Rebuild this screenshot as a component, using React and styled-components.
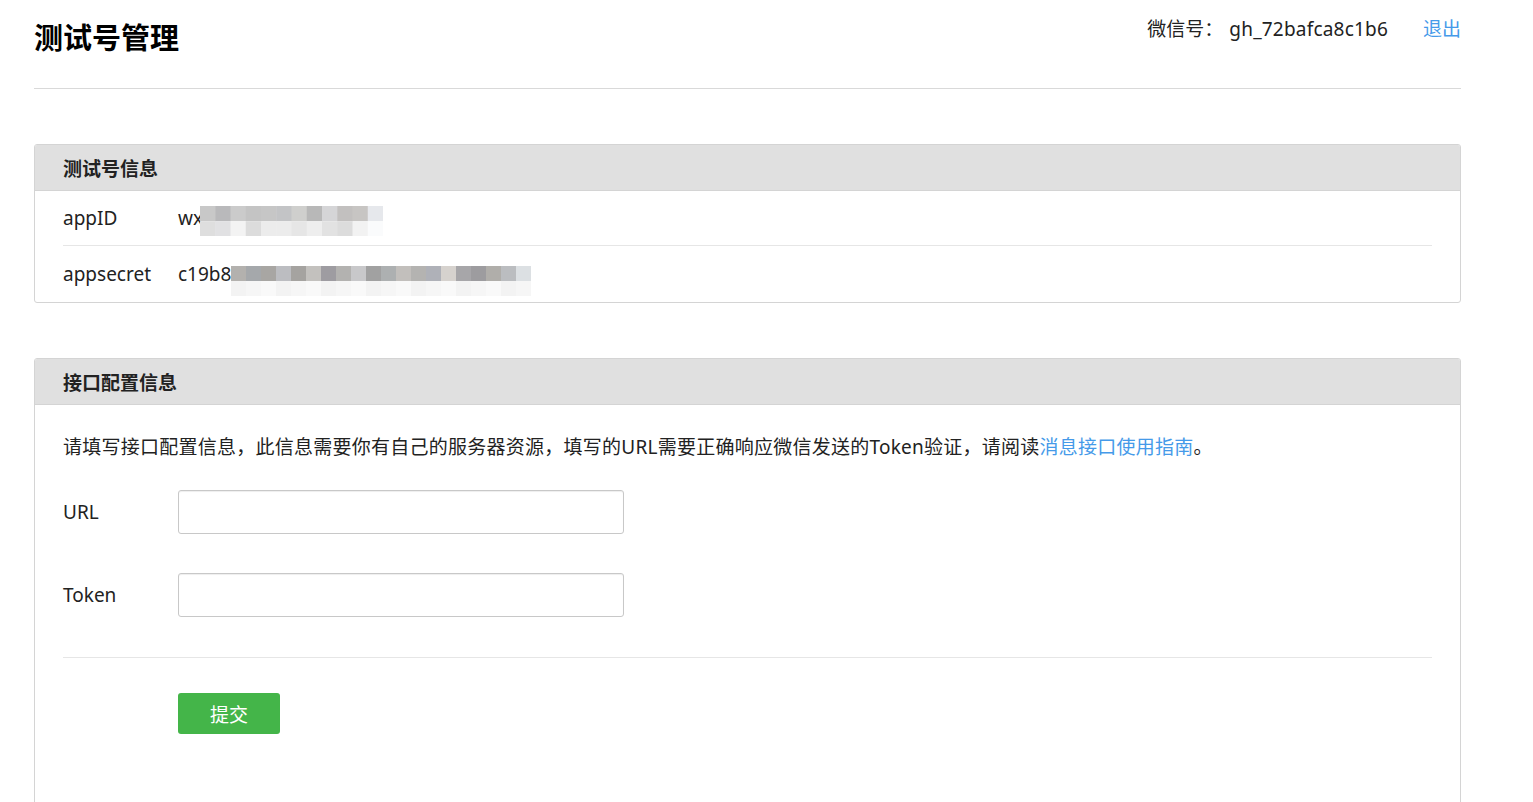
import React from "react";
import styled, { createGlobalStyle } from "styled-components";

const GlobalStyle = createGlobalStyle`
  html, body { margin: 0; padding: 0; background: #fff; }
  body {
    font-family: "Noto Sans", "Noto Sans CJK SC", sans-serif;
    color: #222;
    overflow: hidden;
  }
  * { box-sizing: border-box; }
`;

const Page = styled.div`
  width: 1427px;
  margin-left: 34px;
`;

const Header = styled.header`
  display: flex;
  justify-content: space-between;
  align-items: flex-start;
  height: 89px;
  border-bottom: 1px solid #d9d9d9;
`;

const Title = styled.h1`
  margin: 18px 0 0;
  font-size: 29px;
  line-height: 40px;
  font-weight: 700;
  color: #000;
`;

const Account = styled.div`
  display: flex;
  align-items: center;
  margin-top: 17px;
  font-size: 19px;
  line-height: 24px;
  color: #222;
`;

const AccountId = styled.span`
  margin-left: 6px;
  letter-spacing: 0.2px;
`;

const Link = styled.a`
  color: #459ae9;
  text-decoration: none;
  cursor: pointer;
  margin-left: ${(p) => p.$gap || 0}px;
`;

const Panel = styled.section`
  margin-top: 55px;
  border: 1px solid #d4d4d4;
  border-radius: 3px;
  overflow: hidden;
`;

const PanelHeader = styled.h2`
  margin: 0;
  height: 46px;
  display: flex;
  align-items: center;
  padding: 0 28px;
  background: #e0e0e0;
  border-bottom: 1px solid #d4d4d4;
  font-size: 19px;
  font-weight: 700;
  color: #222;
`;

const PanelBody = styled.div`
  padding: ${(p) => p.$pad || "0 28px 1px"};
`;

const InfoRow = styled.div`
  display: flex;
  align-items: center;
  height: 55px;
  border-bottom: 1px solid #e6e6e6;
  font-size: 19px;
  &:last-child {
    border-bottom: none;
  }
`;

const Label = styled.div`
  width: 115px;
  flex-shrink: 0;
  font-size: 19px;
  line-height: 24px;
`;

const Value = styled.div`
  display: flex;
  align-items: center;
  font-size: 19px;
  line-height: 24px;
`;

const MosaicSvg = styled.svg`
  display: block;
  margin-top: ${(p) => p.$shift || 0}px;
  margin-left: ${(p) => p.$offset || 0}px;
`;

const Description = styled.p`
  margin: 0;
  font-size: 19px;
  line-height: 24px;
  letter-spacing: 0.25px;
  color: #222;
`;

const FormRow = styled.div`
  display: flex;
  align-items: center;
  margin-top: ${(p) => p.$top}px;
`;

const TextInput = styled.input`
  width: 446px;
  height: 44px;
  border: 1px solid #c8c8c8;
  border-radius: 3px;
  box-shadow: inset 0 1px 1px rgba(0, 0, 0, 0.07);
  padding: 0 10px;
  font-size: 19px;
  font-family: inherit;
  outline: none;
  background: #fff;
`;

const Divider = styled.hr`
  margin: 40px 0 0;
  border: none;
  border-top: 1px solid #e6e6e6;
  height: 0;
`;

const SubmitButton = styled.button`
  display: block;
  margin: 35px 0 0 115px;
  width: 102px;
  height: 41px;
  border: none;
  border-radius: 3px;
  background: #44b549;
  color: #fff;
  font-size: 19px;
  font-family: inherit;
  cursor: pointer;
`;

const appIdTop = ["#c8c8c8", "#b9b9bb", "#cbcbcb", "#c4c4c4", "#c6c6c6", "#c3c4c6", "#cfcfcd", "#b8b8b8", "#d5d5d7", "#c2c0bf", "#c7c5c3", "#e6e8ec"];
const appIdBottom = ["#dedede", "#e1e1e3", "#f3f3f3", "#dcdcdc", "#ececec", "#ececec", "#e6e6e6", "#eeeeee", "#e2e2e2", "#dcdcdc", "#f2f2f2", "#fafbfc"];
const secretTop = ["#b3b1ae", "#a5a8ab", "#a8a6a3", "#bcbdc1", "#a5a3a0", "#c3c1be", "#9e9ca1", "#b3b2b0", "#c8c8ca", "#a1a1a1", "#adb0b1", "#c2bfbc", "#b4b3b1", "#afb1b8", "#d6d2ce", "#a7a6a9", "#9d9c9f", "#b0aeaa", "#bbbdc0", "#dce0e3"];
const secretBottom = secretTop.map((_, i) => (i % 3 === 0 ? "#f3f3f3" : i % 3 === 1 ? "#f6f6f6" : "#f9f9f9"));

function Mosaic({ top, bottom, cell = 15, offset = 0, shift = 0 }) {
  const w = top.length * cell;
  return (
    <MosaicSvg width={w} height={cell * 2} viewBox={`0 0 ${w} ${cell * 2}`} $offset={offset} $shift={shift}>
      {top.map((c, i) => (
        <rect key={`t${i}`} x={i * cell} y={0} width={cell + 0.5} height={cell} fill={c} />
      ))}
      {bottom.map((c, i) => (
        <rect key={`b${i}`} x={i * cell} y={cell} width={cell + 0.5} height={cell} fill={c} />
      ))}
    </MosaicSvg>
  );
}

export default function App() {
  return (
    <>
      <GlobalStyle />
      <Page>
        <Header>
          <Title>测试号管理</Title>
          <Account>
            <span>微信号：</span>
            <AccountId>gh_72bafca8c1b6</AccountId>
            <Link $gap={35}>退出</Link>
          </Account>
        </Header>

        <Panel>
          <PanelHeader>测试号信息</PanelHeader>
          <PanelBody>
            <InfoRow>
              <Label>appID</Label>
              <Value>
                wx
                <Mosaic top={appIdTop} bottom={appIdBottom} cell={15.25} offset={-3} shift={6} />
              </Value>
            </InfoRow>
            <InfoRow>
              <Label>appsecret</Label>
              <Value>
                c19b8
                <Mosaic top={secretTop} bottom={secretBottom} cell={15} shift={15} />
              </Value>
            </InfoRow>
          </PanelBody>
        </Panel>

        <Panel>
          <PanelHeader>接口配置信息</PanelHeader>
          <PanelBody $pad="30px 28px 80px">
            <Description>
              请填写接口配置信息，此信息需要你有自己的服务器资源，填写的URL需要正确响应微信发送的Token验证，请阅读
              <Link>消息接口使用指南</Link>。
            </Description>
            <FormRow $top={31}>
              <Label>URL</Label>
              <TextInput type="text" />
            </FormRow>
            <FormRow $top={39}>
              <Label>Token</Label>
              <TextInput type="text" />
            </FormRow>
            <Divider />
            <SubmitButton type="button">提交</SubmitButton>
          </PanelBody>
        </Panel>
      </Page>
    </>
  );
}
